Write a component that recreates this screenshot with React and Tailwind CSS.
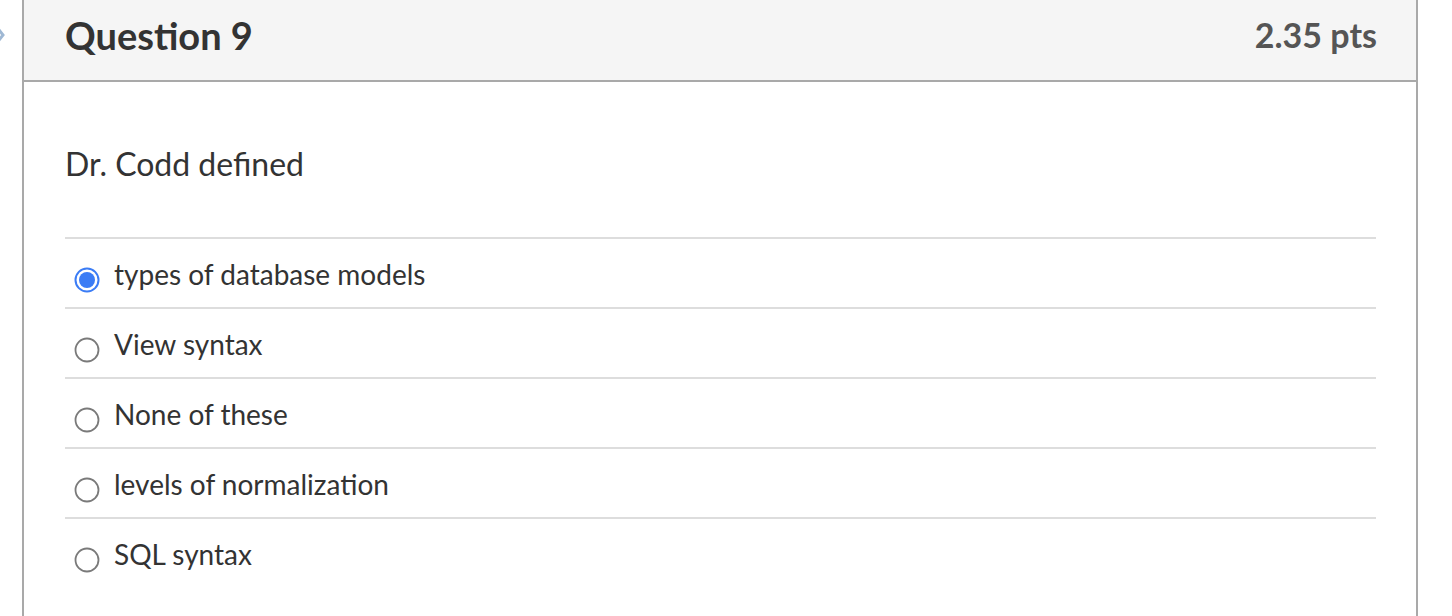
import React from "react";

const options = [
  { label: "types of database models", checked: true },
  { label: "View syntax" },
  { label: "None of these" },
  { label: "levels of normalization" },
  { label: "SQL syntax" },
];

function Radio({ checked }) {
  if (checked) {
    return (
      <svg width="28" height="28" viewBox="0 0 28 28" className="shrink-0">
        <circle cx="14" cy="14" r="11.5" fill="white" stroke="#3b7cf5" strokeWidth="2" />
        <circle cx="14" cy="14" r="8" fill="#3b7cf5" />
      </svg>
    );
  }
  return (
    <svg width="28" height="28" viewBox="0 0 28 28" className="shrink-0">
      <circle cx="14" cy="14" r="11.5" fill="white" stroke="#7a7a7a" strokeWidth="1.8" />
    </svg>
  );
}

export default function App() {
  return (
    <div className="relative w-[1452px] h-[616px] overflow-hidden bg-white" style={{ fontFamily: "Lato, 'Noto Sans', sans-serif" }}>
      <svg className="absolute left-0 top-[24px]" width="8" height="22" viewBox="0 0 8 22">
        <path d="M-4 2 L3 11 L-4 20" fill="none" stroke="#9fb8d4" strokeWidth="3" />
      </svg>
      <div className="ml-[22px] w-[1396px] h-full border-l-2 border-r-2 border-[#a9a9a9]">
        <div className="h-[82px] bg-[#f5f5f5] border-b-2 border-[#a9a9a9] flex items-start justify-between pl-[41px] pr-[39px]">
          <div className="mt-[16px] text-[38px] font-bold text-[#333] leading-none">Question 9</div>
          <div className="mt-[18px] text-[34px] font-bold text-[#555] leading-none">2.35 pts</div>
        </div>
        <div className="pl-[41px] pr-[40px]">
          <div className="h-[155px] pt-[66px] text-[32px] text-[#333] leading-none">Dr. Codd defined</div>
          {options.map((o, i) => (
            <div key={i} className="h-[70px] border-t-2 border-[#dddddd] flex items-start pl-[8px] gap-[13px]">
              <div className="mt-[27px]">
                <Radio checked={o.checked} />
              </div>
              <span className="mt-[21px] text-[28px] text-[#333] leading-none">{o.label}</span>
            </div>
          ))}
        </div>
      </div>
    </div>
  );
}
